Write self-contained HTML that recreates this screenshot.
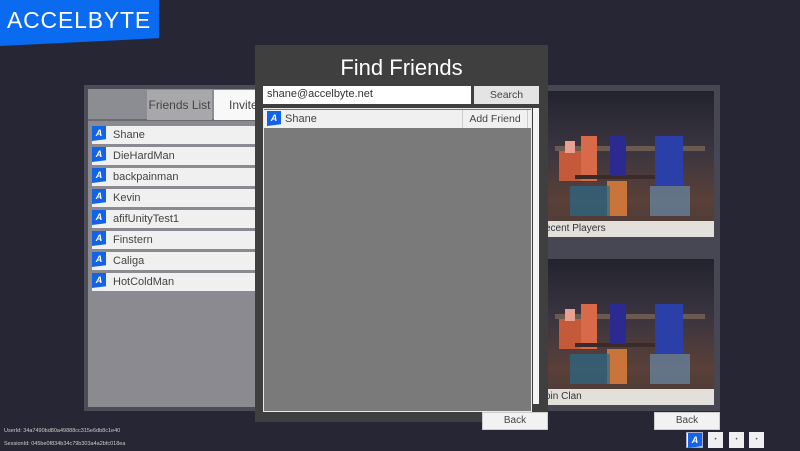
<!DOCTYPE html>
<html><head><meta charset="utf-8"><style>
*{margin:0;padding:0;box-sizing:border-box}
body{width:800px;height:451px;overflow:hidden;background:#262634;font-family:"Liberation Sans",sans-serif;position:relative}
.a{position:absolute}
.ic{position:absolute;width:14px;height:15px;background:#1463e6;color:#fff;font-size:9px;font-weight:bold;line-height:14px;text-align:center;font-style:italic;clip-path:polygon(0 0,100% 0,100% 88%,0 100%)}
.it{position:absolute;left:92px;width:163px;height:18px;background:#f0f0f0}
.it span{position:absolute;left:21px;top:3px;font-size:11px;color:#444}
.img{position:absolute;left:545px;width:169px;height:146px;background:linear-gradient(#22232e,#3a3540 40%,#5a4038 75%,#4a3a38);overflow:hidden}
.img div{position:absolute}
.cap{position:absolute;left:0;bottom:0;width:100%;height:16px;background:rgba(235,232,228,.95);font-size:10px;color:#333;padding:2px 0 0 0}
.btn{position:absolute;background:#f2f2f2;border:1px solid #ccc;font-size:10px;color:#444;text-align:center}
</style></head><body>
<div class="a" style="left:0;top:0;width:159px;height:46px;background:#0a6af0;clip-path:polygon(0 0,100% 0,100% 83%,0 100%)"></div>
<div class="a" style="left:7px;top:7px;color:#fff;font-size:23px;letter-spacing:0.8px">ACCELBYTE</div>

<div class="a" style="left:84px;top:85px;width:180px;height:326px;background:#4c4c56"></div>
<div class="a" style="left:88px;top:89px;width:172px;height:318px;background:#8a8a90"></div>
<div class="a" style="left:88px;top:89px;width:172px;height:32px;background:#8c8c93;border-bottom:2px solid #6a6a70"></div>
<div class="a" style="left:147px;top:90px;width:65px;height:30px;background:#a8a8aa;color:#444;font-size:12px;line-height:30px;text-align:center">Friends List</div>
<div class="a" style="left:214px;top:90px;width:46px;height:30px;background:#f8f8f8;color:#444;font-size:12px;line-height:30px;padding-left:15px">Invite</div>
<div class="it" style="top:126px"><div class="ic">A</div><span>Shane</span></div>
<div class="it" style="top:147px"><div class="ic">A</div><span>DieHardMan</span></div>
<div class="it" style="top:168px"><div class="ic">A</div><span>backpainman</span></div>
<div class="it" style="top:189px"><div class="ic">A</div><span>Kevin</span></div>
<div class="it" style="top:210px"><div class="ic">A</div><span>afifUnityTest1</span></div>
<div class="it" style="top:231px"><div class="ic">A</div><span>Finstern</span></div>
<div class="it" style="top:252px"><div class="ic">A</div><span>Caliga</span></div>
<div class="it" style="top:273px"><div class="ic">A</div><span>HotColdMan</span></div>

<div class="a" style="left:530px;top:85px;width:190px;height:326px;background:#474754"></div>
<div class="img" style="top:91px">
 <div style="left:10px;top:55px;width:150px;height:5px;background:#6a5a50"></div>
 <div style="left:14px;top:60px;width:22px;height:30px;background:#c55a3a"></div>
 <div style="left:20px;top:50px;width:10px;height:12px;background:#e8a090"></div>
 <div style="left:36px;top:45px;width:16px;height:45px;background:#d86a4a"></div>
 <div style="left:30px;top:84px;width:80px;height:4px;background:#3a2a28"></div>
 <div style="left:65px;top:45px;width:16px;height:40px;background:#2a2a90"></div>
 <div style="left:62px;top:90px;width:20px;height:35px;background:#c8743a"></div>
 <div style="left:110px;top:45px;width:28px;height:50px;background:#2a40a8"></div>
 <div style="left:105px;top:95px;width:40px;height:30px;background:#6a8aa8;opacity:.7"></div>
 <div style="left:25px;top:95px;width:40px;height:30px;background:#2a6a88;opacity:.7"></div>
 <div class="cap">ecent Players</div>
</div>
<div class="img" style="top:259px">
 <div style="left:10px;top:55px;width:150px;height:5px;background:#6a5a50"></div>
 <div style="left:14px;top:60px;width:22px;height:30px;background:#c55a3a"></div>
 <div style="left:20px;top:50px;width:10px;height:12px;background:#e8a090"></div>
 <div style="left:36px;top:45px;width:16px;height:45px;background:#d86a4a"></div>
 <div style="left:30px;top:84px;width:80px;height:4px;background:#3a2a28"></div>
 <div style="left:65px;top:45px;width:16px;height:40px;background:#2a2a90"></div>
 <div style="left:62px;top:90px;width:20px;height:35px;background:#c8743a"></div>
 <div style="left:110px;top:45px;width:28px;height:50px;background:#2a40a8"></div>
 <div style="left:105px;top:95px;width:40px;height:30px;background:#6a8aa8;opacity:.7"></div>
 <div style="left:25px;top:95px;width:40px;height:30px;background:#2a6a88;opacity:.7"></div>
 <div class="cap">oin Clan</div>
</div>

<div class="a" style="left:255px;top:45px;width:293px;height:377px;background:#3f3f3f"></div>
<div class="a" style="left:255px;top:55px;width:293px;text-align:center;color:#fff;font-size:22px">Find Friends</div>
<div class="a" style="left:263px;top:86px;width:208px;height:18px;background:#fff;font-size:11px;color:#333;padding:2px 0 0 4px">shane@accelbyte.net</div>
<div class="a" style="left:474px;top:86px;width:65px;height:18px;background:#e4e4e4;font-size:10.5px;color:#444;text-align:center;line-height:18px">Search</div>
<div class="a" style="left:263px;top:108px;width:269px;height:304px;background:#7a7a7a;border:1px solid #e8e8e8"></div>
<div class="a" style="left:533px;top:108px;width:6px;height:296px;background:#f4f4f4"></div>
<div class="a" style="left:264px;top:110px;width:267px;height:18px;background:#f0f0f0"><div class="ic" style="left:3px;top:1px">A</div><span class="a" style="left:21px;top:3px;font-size:11px;color:#444">Shane</span></div>
<div class="a" style="left:462px;top:110px;width:66px;height:18px;border-left:1px solid #ccc;border-right:1px solid #ccc;font-size:10.5px;color:#444;text-align:center;line-height:18px">Add Friend</div>

<div class="btn" style="left:482px;top:412px;width:66px;height:18px;line-height:16px">Back</div>
<div class="btn" style="left:654px;top:412px;width:66px;height:18px;line-height:16px">Back</div>

<div class="a" style="left:4px;top:428px;font-size:5.5px;color:#ccc">UserId: 34a7490bd80a49888cc315e6db8c1e40</div>
<div class="a" style="left:4px;top:441px;font-size:5.5px;color:#ccc">SessionId: 045be0f834b34c79b303a4a2bfc018ea</div>

<div class="a" style="left:686px;top:432px;width:17px;height:16px;background:#fff;border:1px solid #aac"><div class="ic" style="left:1px;top:0">A</div></div>
<div class="a" style="left:708px;top:432px;width:15px;height:16px;background:#f0f0f0;font-size:6px;text-align:center;line-height:16px;color:#555">•</div>
<div class="a" style="left:729px;top:432px;width:15px;height:16px;background:#f0f0f0;font-size:6px;text-align:center;line-height:16px;color:#555">•</div>
<div class="a" style="left:749px;top:432px;width:15px;height:16px;background:#f0f0f0;font-size:6px;text-align:center;line-height:16px;color:#555">•</div>
</body></html>
